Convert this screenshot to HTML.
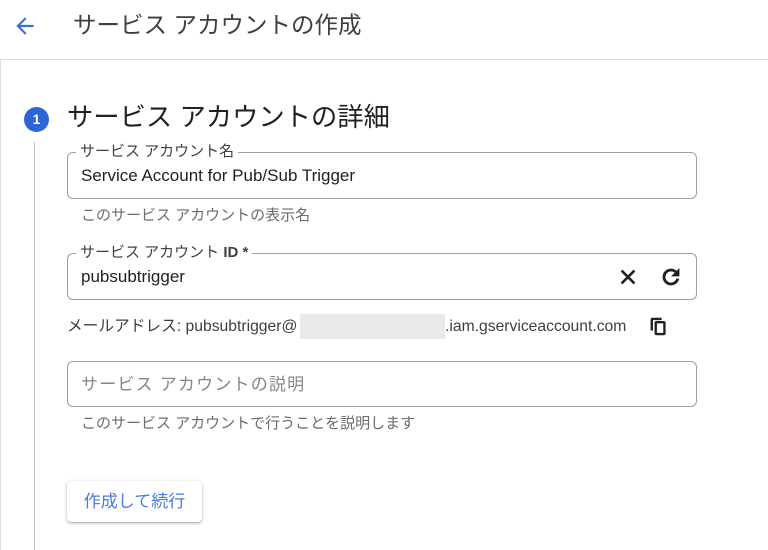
<!DOCTYPE html>
<html><head><meta charset="utf-8"><style>
*{margin:0;padding:0;box-sizing:border-box}
body{width:768px;height:550px;background:#fff;position:relative;overflow:hidden;font-family:"Liberation Sans","Noto Sans CJK JP",sans-serif;color:#202124}
.a{position:absolute;white-space:nowrap}
.box{position:absolute;left:67px;width:630px;border:1px solid #9aa0a6;border-radius:6px}
.lbl{position:absolute;left:8px;top:-11px;background:#fff;padding:0 4px;font-size:15px;color:#3c4043;line-height:19px}
.help{font-size:15px;color:#6b6b6b}
</style></head><body>
<div class="a" style="left:0;top:59px;width:768px;height:1px;background:#dadce0"></div>
<div class="a" style="left:0;top:60px;width:1px;height:490px;background:#dadce0"></div>
<svg class="a" style="left:12px;top:13px" width="26" height="26" viewBox="0 0 24 24"><path d="M20 11H7.8l5.6-5.6L12 4l-8 8 8 8 1.4-1.4L7.8 13H20z" fill="#3c6fd8"/></svg>
<div class="a" style="left:73px;top:10px;font-size:23.5px;color:#3c4043;line-height:30px">サービス アカウントの作成</div>
<div class="a" style="left:24px;top:107px;width:25px;height:25px;border-radius:50%;background:#2f64d6;color:#fff;font-size:14px;font-weight:bold;text-align:center;line-height:25px">1</div>
<div class="a" style="left:67px;top:100px;font-size:26.3px;color:#202124;line-height:34px">サービス アカウントの詳細</div>
<div class="a" style="left:34px;top:142px;width:1px;height:408px;background:#bdbdbd"></div>

<div class="box" style="top:152px;height:47px"><div class="lbl">サービス アカウント名</div>
<div class="a" style="left:13px;top:12px;font-size:17px;line-height:21px">Service Account for Pub/Sub Trigger</div></div>
<div class="a help" style="left:81px;top:204px">このサービス アカウントの表示名</div>

<div class="box" style="top:253px;height:47px"><div class="lbl">サービス アカウント <b>ID *</b></div>
<div class="a" style="left:13px;top:12px;font-size:17px;line-height:21px">pubsubtrigger</div>
<svg class="a" style="left:549px;top:12px" width="22" height="22" viewBox="0 0 24 24"><path d="M5 5L19 19M19 5L5 19" stroke="#202124" stroke-width="2.8"/></svg>
<svg class="a" style="left:591px;top:11px" width="24" height="24" viewBox="0 0 24 24"><path d="M17.65 6.35A7.96 7.96 0 0 0 12 4a8 8 0 1 0 7.73 10h-2.08A6 6 0 1 1 12 6c1.66 0 3.14.69 4.22 1.78L13 11h7V4l-2.35 2.35z" fill="#202124" stroke="#202124" stroke-width="0.8"/></svg></div>

<div class="a" style="left:67px;top:317px;font-size:15.7px;color:#3c4043;line-height:19px">メールアドレス: pubsubtrigger@</div>
<div class="a" style="left:300px;top:314px;width:145px;height:25px;background:#e9e9e9"></div>
<div class="a" style="left:445px;top:317px;font-size:15.7px;color:#3c4043;line-height:19px">.iam.gserviceaccount.com</div>
<svg class="a" style="left:649px;top:317px" width="19" height="19" viewBox="0 0 24 24"><path d="M16 1H4c-1.1 0-2 .9-2 2v14h3V4h11V1z" fill="#202124"/><rect x="8.5" y="6.5" width="11" height="15" rx="1" fill="none" stroke="#202124" stroke-width="3"/></svg>

<div class="box" style="top:361px;height:46px">
<div class="a" style="left:13px;top:12px;font-size:17px;letter-spacing:1.2px;line-height:21px;color:#80868b">サービス アカウントの説明</div></div>
<div class="a help" style="left:81px;top:412px">このサービス アカウントで行うことを説明します</div>

<div class="a" style="left:67px;top:481px;width:135px;height:41px;border-radius:4px;background:#fff;box-shadow:0 1px 3px rgba(0,0,0,.3),0 1px 1px rgba(0,0,0,.1);color:#4a7be0;font-size:17px;text-align:center;line-height:41px">作成して続行</div>
</body></html>
